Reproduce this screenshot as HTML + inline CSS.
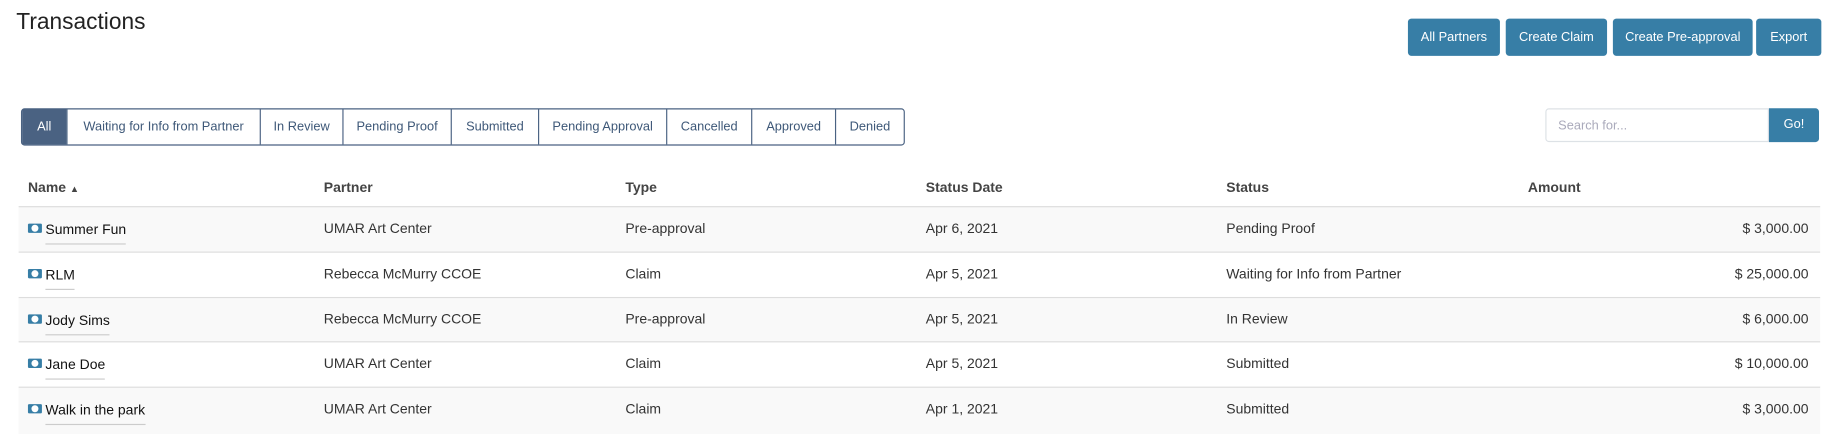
<!DOCTYPE html><html><head><style>
body{margin:0;width:1826px;height:427px;background:#fff;font-family:"Liberation Sans",sans-serif;color:#333;position:relative;overflow:hidden}
#w{position:absolute;left:0;top:0;width:1568px;height:367px;transform:scale(1.16454);transform-origin:0 0}
.a{position:absolute}
h1{position:absolute;left:14px;top:8px;margin:0;font-weight:300;font-size:19.5px;color:#222}
.btn{position:absolute;top:16px;height:32px;background:#377ea6;color:#fff;border-radius:3px;font-size:11px;line-height:32px;text-align:center}
.tabs{position:absolute;left:18px;top:93px;height:30px;border:1px solid #4a6282;border-radius:3px;display:flex;font-size:11px}
.tabs div{border-left:1px solid #4a6282;line-height:30px;text-align:center;color:#3e5878;box-sizing:border-box}
.tabs div:first-child{border-left:none;background:#4a6282;color:#fff}
.th{position:absolute;top:154px;font-weight:bold;font-size:12px;color:#444}
.row{position:absolute;left:16px;width:1547px;height:38px;border-top:1px solid #ddd;font-size:12px}
.row span{position:absolute;top:11px}
.s{background:#f9f9f9}
.ic{position:absolute;left:8px;top:14px;width:12px;height:8px;background:#377ea6;border-radius:1px}
.ic:after{content:"";position:absolute;left:3px;top:1px;width:6px;height:6px;background:#fff;border-radius:50%}
.nm{left:23px;color:#111;border-bottom:1px solid #ccc;padding-bottom:5px;top:12px!important}
</style></head><body><div id="w">
<h1>Transactions</h1>
<div class="btn" style="left:1209px;width:79px">All Partners</div>
<div class="btn" style="left:1293px;width:87px">Create Claim</div>
<div class="btn" style="left:1385px;width:120px">Create Pre-approval</div>
<div class="btn" style="left:1508px;width:56px">Export</div>
<div class="tabs">
<div style="width:38px">All</div><div style="width:166px">Waiting for Info from Partner</div><div style="width:71px">In Review</div><div style="width:93px">Pending Proof</div><div style="width:75px">Submitted</div><div style="width:110px">Pending Approval</div><div style="width:73px">Cancelled</div><div style="width:72px">Approved</div><div style="width:59px">Denied</div>
</div>
<div class="a" style="left:1327px;top:93px;width:180px;height:27px;border:1px solid #dde2e6;border-radius:3px 0 0 3px;font-size:11px;color:#aab;line-height:29px;padding-left:10px">Search for...</div>
<div class="a" style="left:1519px;top:93px;width:43px;height:29px;background:#377ea6;color:#fff;border-radius:0 3px 3px 0;font-size:11px;line-height:29px;text-align:center">Go!</div>
<div class="th" style="left:24px">Name <span style="font-size:8px">▲</span></div>
<div class="th" style="left:278px">Partner</div>
<div class="th" style="left:537px">Type</div>
<div class="th" style="left:795px">Status Date</div>
<div class="th" style="left:1053px">Status</div>
<div class="th" style="left:1312px">Amount</div>
<div class="row s" style="top:177px"><i class="ic"></i><span class="nm">Summer Fun</span><span style="left:262px">UMAR Art Center</span><span style="left:521px">Pre-approval</span><span style="left:779px">Apr 6, 2021</span><span style="left:1037px">Pending Proof</span><span style="right:10px">$ 3,000.00</span></div>
<div class="row" style="top:216px"><i class="ic"></i><span class="nm">RLM</span><span style="left:262px">Rebecca McMurry CCOE</span><span style="left:521px">Claim</span><span style="left:779px">Apr 5, 2021</span><span style="left:1037px">Waiting for Info from Partner</span><span style="right:10px">$ 25,000.00</span></div>
<div class="row s" style="top:255px"><i class="ic"></i><span class="nm">Jody Sims</span><span style="left:262px">Rebecca McMurry CCOE</span><span style="left:521px">Pre-approval</span><span style="left:779px">Apr 5, 2021</span><span style="left:1037px">In Review</span><span style="right:10px">$ 6,000.00</span></div>
<div class="row" style="top:293px"><i class="ic"></i><span class="nm">Jane Doe</span><span style="left:262px">UMAR Art Center</span><span style="left:521px">Claim</span><span style="left:779px">Apr 5, 2021</span><span style="left:1037px">Submitted</span><span style="right:10px">$ 10,000.00</span></div>
<div class="row s" style="top:332px;height:40px"><i class="ic"></i><span class="nm">Walk in the park</span><span style="left:262px">UMAR Art Center</span><span style="left:521px">Claim</span><span style="left:779px">Apr 1, 2021</span><span style="left:1037px">Submitted</span><span style="right:10px">$ 3,000.00</span></div>
</div></body></html>
